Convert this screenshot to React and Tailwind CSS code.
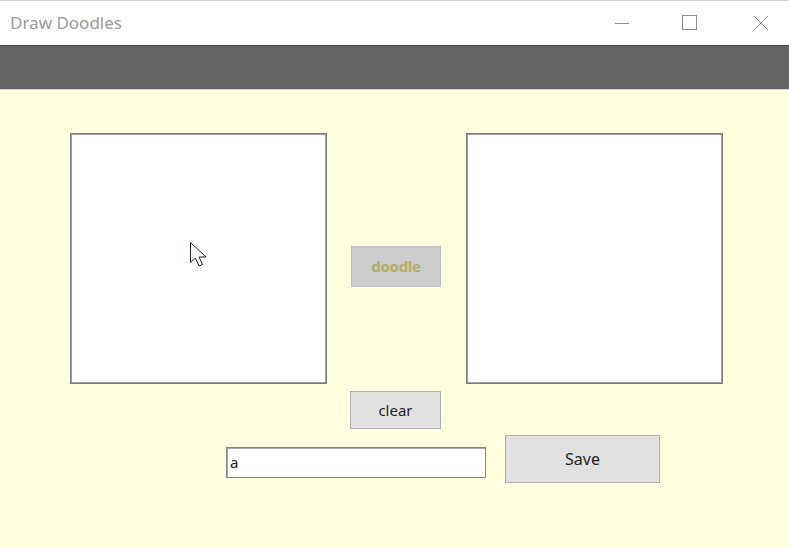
import React from "react";

export default function App() {
  return (
    <div className="w-[789px] h-[548px] flex flex-col bg-[#ffffe0] overflow-hidden" style={{ fontFamily: '"Noto Sans", "Open Sans", sans-serif' }}>
      {/* Title bar */}
      <div className="h-[45px] flex items-center bg-white border-t border-[#cfcfcf] shrink-0">
        <div className="pl-[10px] text-[17px] text-[#9a9a9a] flex-1 leading-none pb-[2px]">Draw Doodles</div>
        <div className="flex items-center h-full">
          <div className="w-[46px] h-full flex items-center justify-center mr-[22px]">
            <svg width="16" height="16" viewBox="0 0 16 16"><line x1="1" y1="8.5" x2="15" y2="8.5" stroke="#8c8c8c" strokeWidth="1" /></svg>
          </div>
          <div className="w-[46px] h-full flex items-center justify-center mr-[25px]">
            <svg width="16" height="16" viewBox="0 0 16 16"><rect x="0.5" y="0.5" width="14" height="14" fill="none" stroke="#8c8c8c" strokeWidth="1" /></svg>
          </div>
          <div className="w-[46px] h-full flex items-center justify-center mr-[5px]">
            <svg width="16" height="16" viewBox="0 0 16 16"><path d="M1 1 L15 15 M15 1 L1 15" stroke="#8c8c8c" strokeWidth="1" /></svg>
          </div>
        </div>
      </div>
      {/* Toolbar strip */}
      <div className="h-[45px] bg-[#646464] border-t border-[#505050] border-b border-b-[#d8d8c0] shrink-0" />
      {/* Content */}
      <div className="relative flex-1 flex flex-col pt-[43px]">
        <div className="flex items-start pl-[70px]">
          <div className="relative w-[257px] h-[251px] bg-white border border-[#7a7a7a] shadow-[inset_1px_1px_0_#a0a0a0,inset_-1px_-1px_0_#a0a0a0]">
            <svg className="absolute left-[118px] top-[107px]" width="20" height="28" viewBox="0 0 20 28">
              <path d="M1.5 1.5 L1.5 21.5 L6.5 17 L10 25 L13.5 23.5 L10 16 L17 16 Z" fill="white" stroke="#1a1a2a" strokeWidth="1" strokeLinejoin="miter" />
            </svg>
          </div>
          <div className="ml-[24px] mt-[113px] w-[90px] h-[41px] bg-[#cccccc] border border-[#bfbfbf] flex items-center justify-center text-[15px] font-bold text-[#b3ad62] tracking-[-0.3px]">doodle</div>
          <div className="ml-[25px] w-[257px] h-[251px] bg-white border border-[#7a7a7a] shadow-[inset_1px_1px_0_#a0a0a0,inset_-1px_-1px_0_#a0a0a0]" />
        </div>
        <div className="pl-[350px] mt-[7px]">
          <div className="w-[91px] h-[38px] bg-[#e1e1e1] border border-[#adadad] flex items-center justify-center text-[15px] text-[#1e1e1e]">clear</div>
        </div>
        <div className="flex items-start mt-[6px]">
          <div className="ml-[226px] mt-[12px] w-[260px] h-[31px] bg-white border border-[#858585] shadow-[inset_1px_1px_0_#a8a8a8] flex items-center pl-[3px] text-[15px] text-[#1e1e1e]">a</div>
          <div className="ml-[19px] w-[155px] h-[48px] bg-[#e1e1e1] border border-[#adadad] flex items-center justify-center text-[16px] text-[#1e1e1e]">Save</div>
        </div>
      </div>
    </div>
  );
}
